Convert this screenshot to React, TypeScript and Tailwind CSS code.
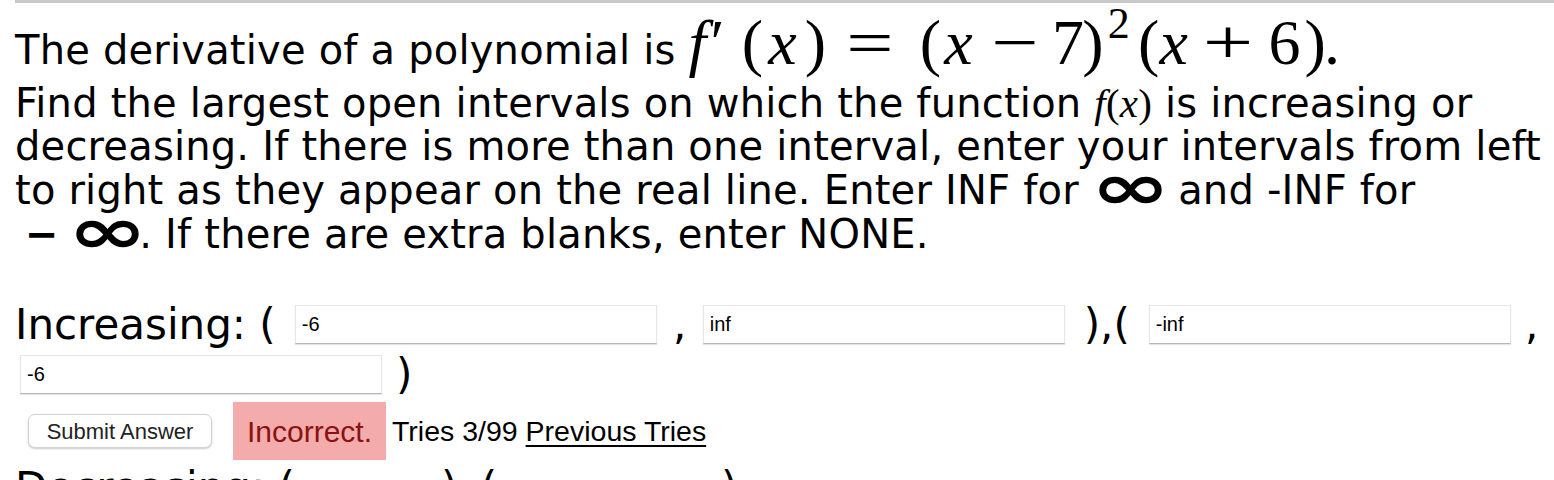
import React from 'react';

const serif = "font-['Liberation_Serif',serif]";
const sans = "font-['Liberation_Sans',Arial,sans-serif]";
const verdana = "font-['DejaVu_Sans',Verdana,sans-serif]";

// thick, wide infinity sign as it appears in the prompt text
function Inf({ className = '' }: { className?: string }) {
  return (
    <span
      className={`inline-block relative top-[5px] h-[24px] leading-[24px] font-['DejaVu_Sans',sans-serif] font-bold text-[64px] scale-x-150 ${className}`}
    >
      ∞
    </span>
  );
}

function Blank({ value, className = 'w-[362px]' }: { value?: string; className?: string }) {
  return (
    <input
      readOnly
      value={value ?? ''}
      className={`${className} h-[39px] shrink-0 bg-white border border-[#e6e6e6] border-b-[#b5b5b5] shadow-[0_1px_1px_rgba(0,0,0,0.1)] px-[6px] ${sans} text-[20px] text-black outline-none`}
    />
  );
}

// binary operators are a bit wider in the math font than in Times
function Op({ children, className = '' }: { children: React.ReactNode; className?: string }) {
  return <span className={`inline-block ${className}`}>{children}</span>;
}

function Derivative() {
  return (
    <span className={`${serif} text-[64px] leading-none`}>
      <i>f</i>
      <span className="ml-[4px]">′</span>
      <span className="ml-[17px]">(</span>
      <i className="ml-[5px]">x</i>
      <span className="ml-[8px]">)</span>
      <Op className="ml-[26px] mr-[31px] scale-x-[1.31]">=</Op>(<i className="ml-[3px]">x</i>
      <Op className="ml-[24px] mr-[19px] scale-x-[1.31]">−</Op>7<span className="-ml-[2px]">)</span>
      <span className="inline-block ml-[4px] text-[44px] relative -top-[26px]">2</span>
      <span className="ml-[8px]">(</span>
      <i>x</i>
      <Op className="ml-[22px] mr-[22px] scale-x-[1.4]">+</Op>6<span className="ml-[4px]">)</span>
      <span className="-ml-[2px]">.</span>
    </span>
  );
}

export default function App() {
  return (
    <div className="h-[480px] bg-white pl-[15px] overflow-hidden">
      <div className="border-t-[3px] border-[#c9c9c9]" />

      <div className={`${verdana} text-[40px] tracking-[0.2px] text-black whitespace-nowrap`}>
        <div className="h-[78px] pt-[8px] leading-none">
          The derivative of a polynomial is <Derivative />
        </div>
        <div className="leading-[44px]">
          Find the largest open intervals on which the function{' '}
          <span className={`${serif} text-[41px]`}>
            <i>f</i>(<i>x</i>)
          </span>{' '}
          is increasing or
        </div>
        <div className="leading-[43px]">
          decreasing. If there is more than one interval, enter your intervals from left
        </div>
        <div className="leading-[44px]">
          to right as they appear on the real line. Enter INF for <Inf className="ml-[12px] mr-[8px]" /> and -INF
          for
        </div>
        <div className="leading-[44px]">
          <span className="inline-block ml-[10px] font-bold">−</span>
          <Inf className="ml-[22px] mr-[5px]" />. If there are extra blanks, enter NONE.
        </div>
      </div>

      <div className={`${verdana} text-[42px] text-black mt-[43px]`}>
        <div className="flex items-center h-[50px] whitespace-nowrap">
          <span>Increasing: (</span>
          <Blank value="-6" className="w-[362px] ml-[19px]" />
          <span className="w-[46px] text-center">,</span>
          <Blank value="inf" />
          <span className="w-[84px] text-center">),(</span>
          <Blank value="-inf" />
          <span className="w-[42px] text-center">,</span>
        </div>
        <div className="flex items-center h-[50px] whitespace-nowrap">
          <Blank value="-6" className="w-[362px] ml-[5px]" />
          <span className="ml-[14px]">)</span>
        </div>
      </div>

      <div className={`${sans} flex items-center mt-[3px] ml-[13px]`}>
        <button className="h-[34px] w-[184px] rounded-[7px] bg-white border border-[#d4d4d4] shadow-[0_1px_2px_rgba(0,0,0,0.22)] text-[22px] text-[#222]">
          Submit Answer
        </button>
        <span className="ml-[21px] h-[58px] w-[153px] flex items-center justify-center bg-[#f4abab] text-[#8a1212] text-[30px]">
          Incorrect.
        </span>
        <span className="ml-[6px] text-[28.5px] text-black">
          Tries 3/99 <span className="underline underline-offset-[4px]">Previous Tries</span>
        </span>
      </div>

      <div className={`${verdana} flex items-start h-[64px] text-[42px] leading-[50px] text-black mt-[3px] whitespace-nowrap`}>
        <span>Decreasing: (</span>
        <Blank className="w-[124px] ml-[12px] self-end" />
        <span className="ml-[10px]">)</span>
        <span className="ml-[10px]">,(</span>
        <Blank className="w-[200px] ml-[14px] self-end" />
        <span className="ml-[10px]">)</span>
      </div>
    </div>
  );
}
